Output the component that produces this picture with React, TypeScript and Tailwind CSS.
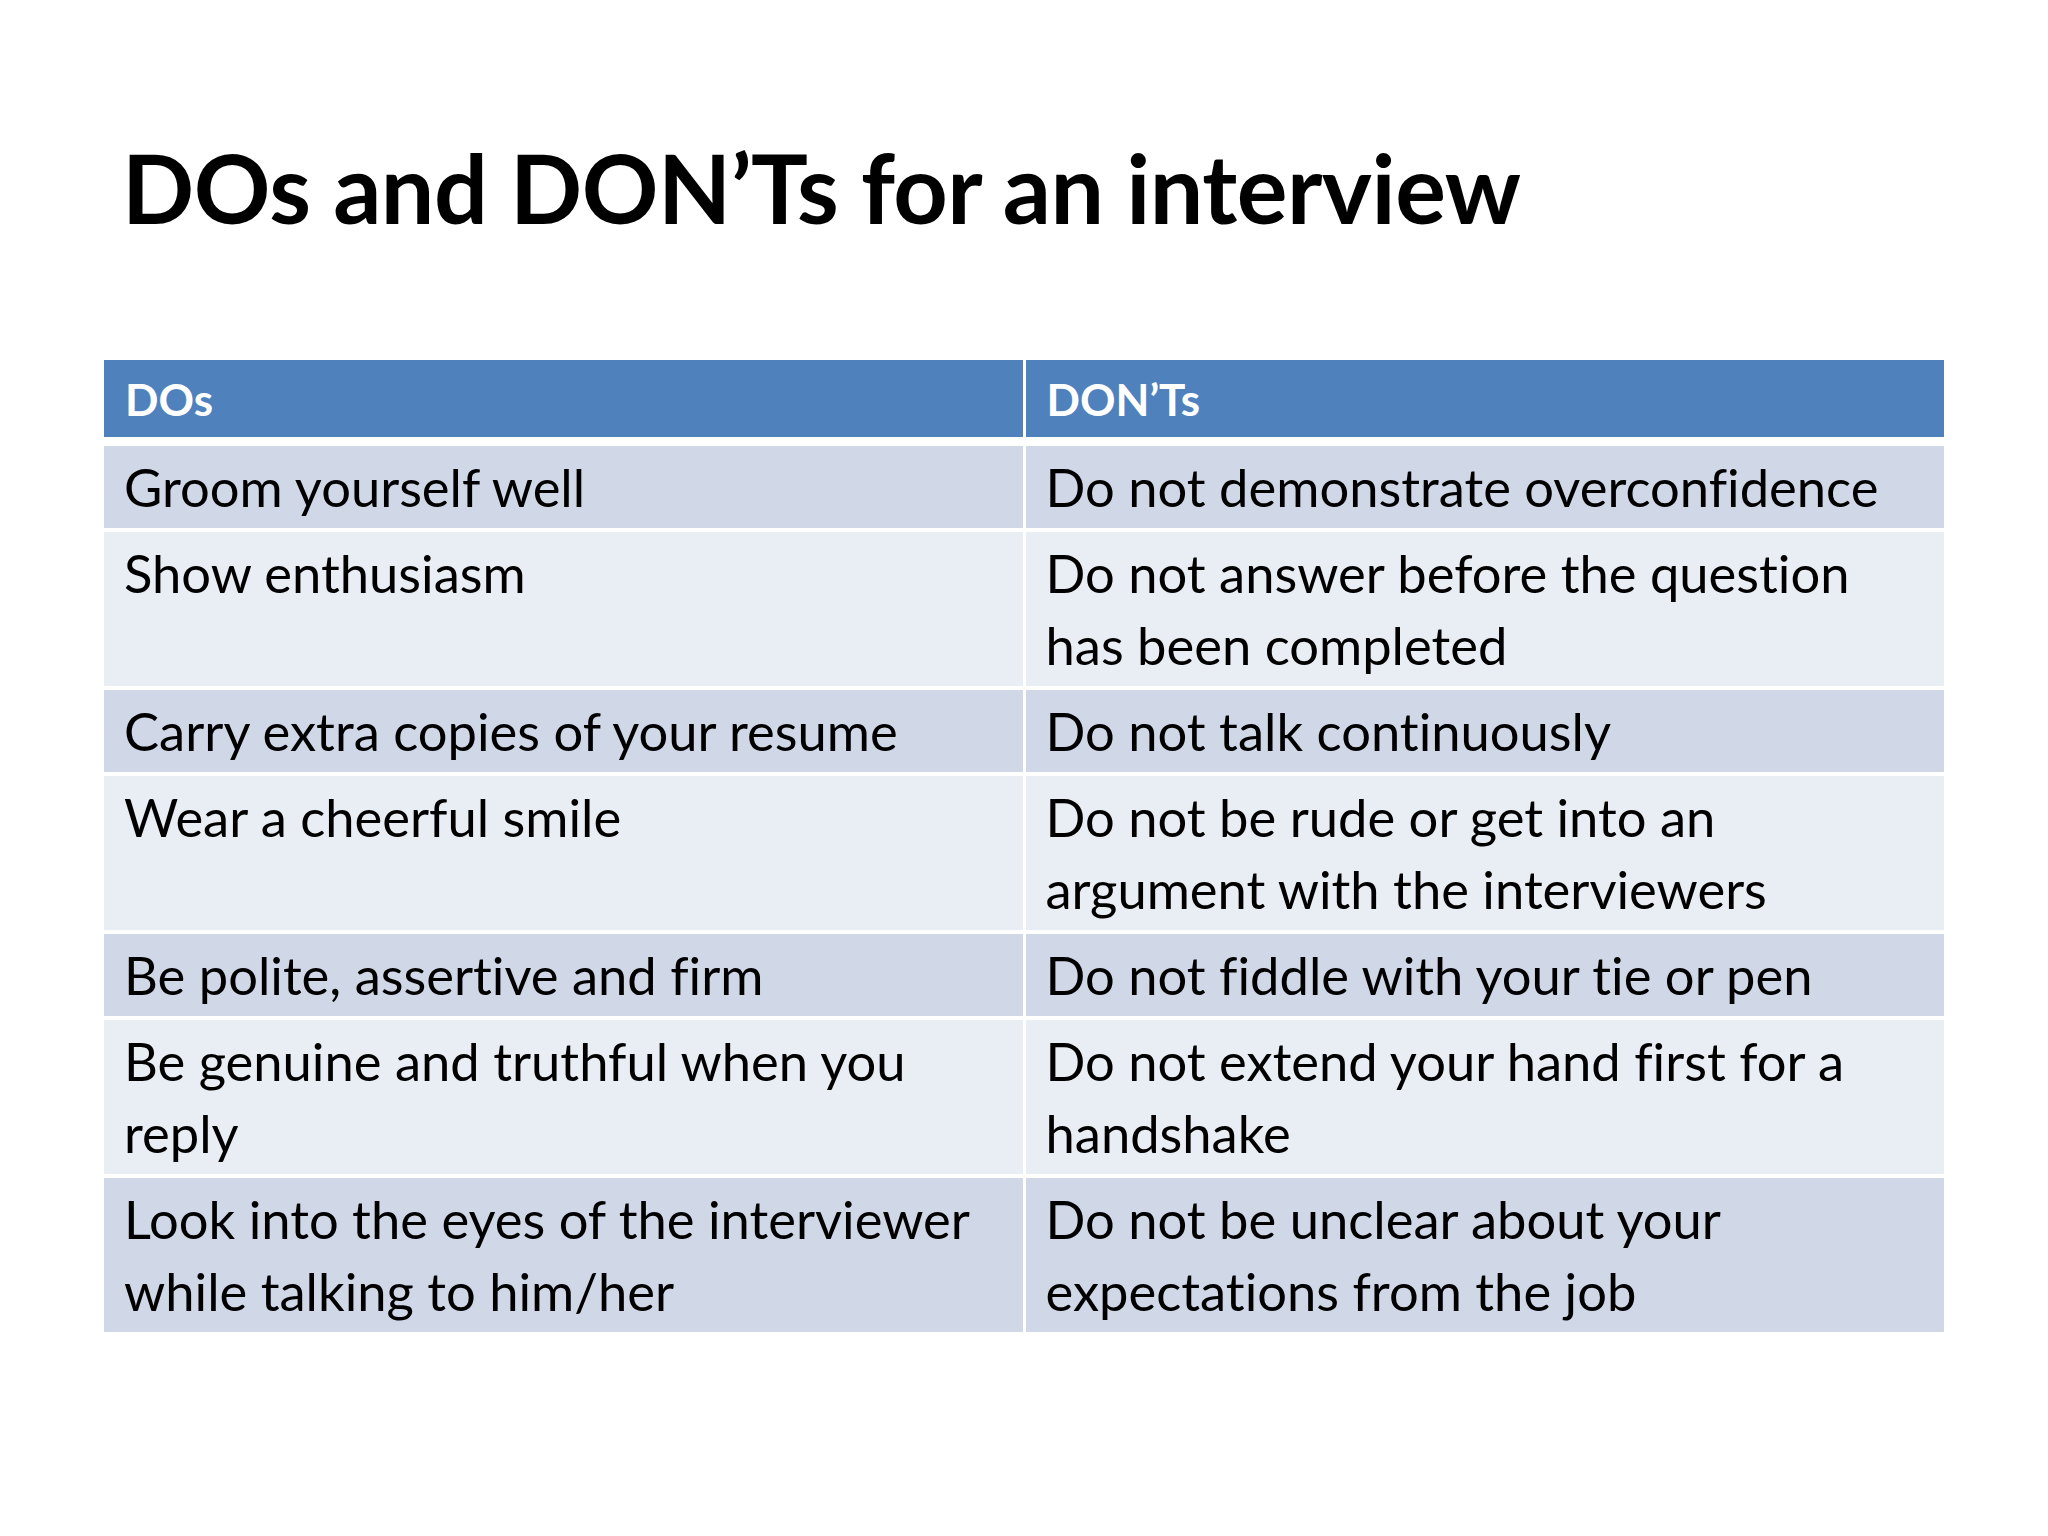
const rows: [string[], string[]][] = [
  [["Groom yourself well"], ["Do not demonstrate overconfidence"]],
  [["Show enthusiasm"], ["Do not answer before the question", "has been completed"]],
  [["Carry extra copies of your resume"], ["Do not talk continuously"]],
  [["Wear a cheerful smile"], ["Do not be rude or get into an", "argument with the interviewers"]],
  [["Be polite, assertive and firm"], ["Do not fiddle with your tie or pen"]],
  [["Be genuine and truthful when you", "reply"], ["Do not extend your hand first for a", "handshake"]],
  [["Look into the eyes of the interviewer", "while talking to him/her"], ["Do not be unclear about your", "expectations from the job"]],
];

function Cell({ lines, odd }: { lines: string[]; odd: boolean }) {
  return (
    <div className={odd ? "bg-[#d0d8e8] pl-[20px] py-[5px]" : "bg-[#e9edf4] pl-[20px] py-[5px]"}>
      {lines.map((l) => (
        <div key={l} className="whitespace-nowrap">
          {l}
        </div>
      ))}
    </div>
  );
}

export default function App() {
  return (
    <div
      className="w-[2048px] h-[1536px] bg-white text-black overflow-hidden [font-variant-ligatures:none]"
      style={{ fontFamily: "Lato, 'Open Sans', sans-serif" }}
    >
      <div className="pl-[122px] pt-[140px]">
        <h1 className="text-[95px] leading-[95px] font-bold tracking-[-0.5px]">
          DOs and DON’Ts for an interview
        </h1>
      </div>

      <div className="ml-[104px] mt-[125px] w-[1840px]">
        <div className="grid grid-cols-2 gap-x-[3px] mb-[9px]">
          <div className="h-[77px] bg-[#4f81bd] pl-[21px] pt-[14px] text-white font-bold text-[44px] leading-[50px]">
            DOs
          </div>
          <div className="h-[77px] bg-[#4f81bd] pl-[21px] pt-[14px] text-white font-bold text-[44px] leading-[50px]">
            DON’Ts
          </div>
        </div>
        <div className="grid grid-cols-2 gap-x-[3px] gap-y-[4px] text-[52.5px] leading-[72px]">
          {rows.map(([left, right], i) => (
            <div key={i} className="contents">
              <Cell lines={left} odd={i % 2 === 0} />
              <Cell lines={right} odd={i % 2 === 0} />
            </div>
          ))}
        </div>
      </div>
    </div>
  );
}
